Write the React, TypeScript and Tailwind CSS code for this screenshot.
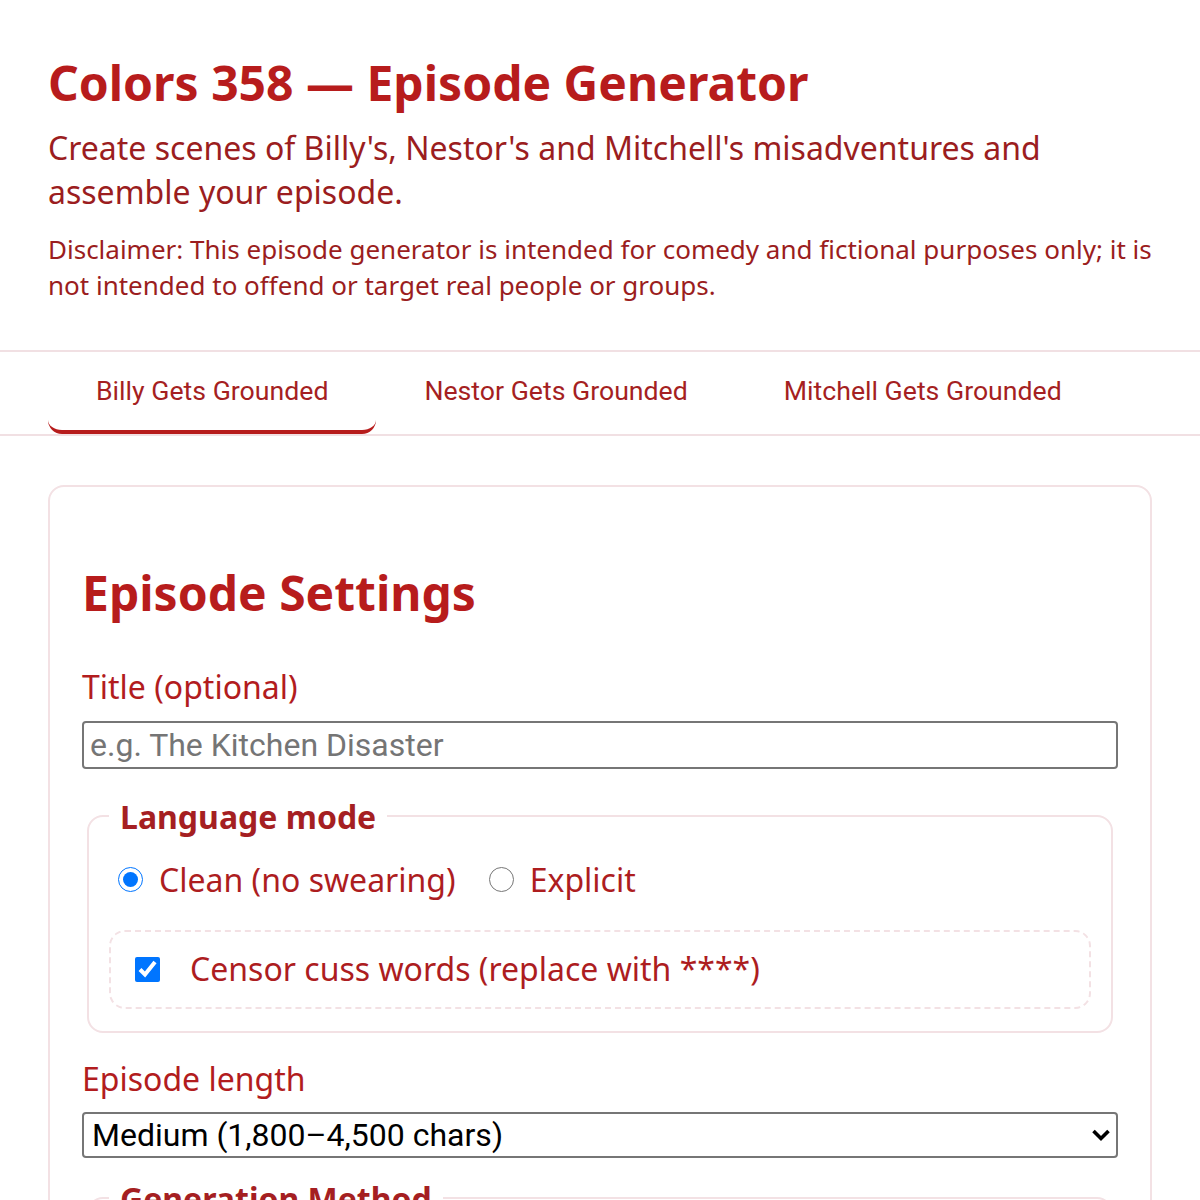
const TABS = ["Billy Gets Grounded", "Nestor Gets Grounded", "Mitchell Gets Grounded"];

const noto = "font-['Noto_Sans',sans-serif]";
const roboto = "font-['Roboto',sans-serif]";

export default function App() {
  return (
    <div className={`min-h-[1200px] bg-white text-[#ad1d1f] ${noto}`}>
      {/* header */}
      <header className="px-12 pt-[54px]">
        <h1 className="text-[48px] font-bold leading-[1.2] text-[#b71c1c]">
          Colors 358 — Episode Generator
        </h1>
        <p className="mt-[14px] text-[32px] leading-[44px] text-[#9b1d20]">
          Create scenes of Billy's, Nestor's and Mitchell's misadventures and assemble your episode.
        </p>
        <p className="mt-[17px] text-[26px] leading-[36px] text-[#9b1d20]">
          Disclaimer: This episode generator is intended for comedy and fictional purposes only; it is not
          intended to offend or target real people or groups.
        </p>
      </header>

      {/* tabs */}
      <nav className="mt-[47px] flex border-y-2 border-[#f1e0e3] px-12">
        {TABS.map((t, i) => (
          <button
            key={t}
            className={`px-12 pt-[24px] pb-[24px] text-[26.67px] leading-[30px] text-[#a51f22] ${roboto} ${
              i === 0 ? "rounded-b-[14px] border-b-4 border-[#b71c1c]" : "border-b-4 border-transparent"
            }`}
          >
            {t}
          </button>
        ))}
      </nav>

      {/* settings card */}
      <section className="mx-12 mt-[49px] rounded-2xl border-2 border-[#f3e1e4] px-8 pt-[77px] pb-10">
        <h2 className="text-[48px] font-bold leading-[58px] text-[#b71c1c]">Episode Settings</h2>

        <label className="mt-[42px] block text-[32px] leading-[45px] text-[#b21c1e]">Title (optional)</label>
        <div className="mt-[12px]">
          <input
            type="text"
            placeholder="e.g. The Kitchen Disaster"
            className={`block h-[48px] w-full rounded-[4px] border-2 border-[#767676] px-[6px] text-[32px] text-black placeholder:text-[#757575] ${roboto}`}
          />
        </div>

        <fieldset className="mx-[5px] mt-[25px] rounded-2xl border-2 border-[#f3e1e4] px-5 pb-[22px]">
          <legend className="px-[11px] text-[32px] font-bold leading-[45px] text-[#a51f22]">Language mode</legend>
          <div className="mt-[18px] flex items-center pl-[9px] text-[32px] leading-[45px]">
            <label className="flex items-center gap-4">
              <input type="radio" name="lang" defaultChecked className="h-[25px] w-[25px]" />
              Clean (no swearing)
            </label>
            <label className="ml-[33px] flex items-center gap-4">
              <input type="radio" name="lang" className="h-[25px] w-[25px]" />
              Explicit
            </label>
          </div>
          <div className="mt-[28px] flex h-[79px] items-center gap-[30px] rounded-2xl border-2 border-dashed border-[#f3e1e4] pl-6 text-[32px]">
            <input type="checkbox" defaultChecked className="h-[25px] w-[25px]" />
            <span>Censor cuss words (replace with ****)</span>
          </div>
        </fieldset>

        <label className="mt-[23px] block text-[32px] leading-[45px] text-[#b21c1e]">Episode length</label>
        <div className="relative mt-[11px]">
          <select
            defaultValue="medium"
            className={`block h-[46px] w-full appearance-none rounded-[4px] border-2 border-[#767676] bg-white px-[8px] text-[32px] leading-[40px] text-black ${roboto}`}
          >
            <option value="short">Short (600–1,800 chars)</option>
            <option value="medium">Medium (1,800–4,500 chars)</option>
            <option value="long">Long (4,500–9,000 chars)</option>
          </select>
          {/* chevron over the select */}
          <svg
            className="pointer-events-none absolute right-[7px] top-[16px] h-[14px] w-[20px]"
            viewBox="0 0 20 14"
            fill="none"
            stroke="#000"
            strokeWidth="3.6"
          >
            <path d="M2.5 3 L10 10.5 L17.5 3" />
          </svg>
        </div>

        <fieldset className="mx-[5px] mt-[18px] rounded-2xl border-2 border-[#f3e1e4] px-5 pb-[21px]">
          <legend className="px-[11px] text-[32px] font-bold leading-[45px] text-[#a51f22]">Generation Method</legend>
          <div className="h-[120px]" />
        </fieldset>
      </section>
    </div>
  );
}
